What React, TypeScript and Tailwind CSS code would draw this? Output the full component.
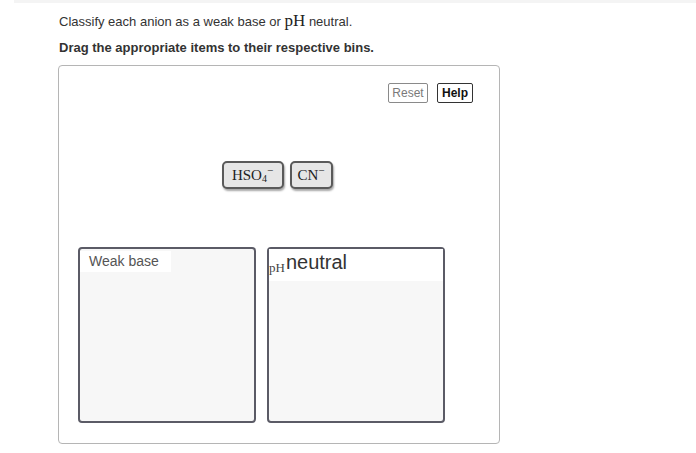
import React from "react";

export default function App() {
  const sans = { fontFamily: '"Liberation Sans", Arial, sans-serif' };
  return (
    <div className="relative w-[696px] h-[453px] bg-white overflow-hidden" style={sans}>
      <div className="absolute left-[14px] top-0 right-0 h-[3px] bg-[#f4f4f4]" />
      <div className="pl-[59px] pt-[13px]">
        <p className="text-[13px] leading-[16px] text-[#333]">
          Classify each anion as a weak base or{" "}
          <span className="text-[17px] text-[#222]" style={{ fontFamily: '"Liberation Serif", "Times New Roman", serif' }}>
            pH
          </span>{" "}
          neutral.
        </p>
        <p className="mt-[10px] text-[13px] leading-[16px] font-bold text-[#333]">
          Drag the appropriate items to their respective bins.
        </p>
      </div>
      <div className="ml-[58px] mt-[9px] w-[442px] h-[379px] border border-[#b5b5b5] rounded-[4px] flex flex-col">
        <div className="flex justify-end gap-[9px] pr-[26px] pt-[17px]">
          <div className="h-[20px] w-[40px] flex items-center justify-center border border-[#8a8a8a] rounded-[2px] text-[12px] text-[#7a7a7a]">
            Reset
          </div>
          <div className="h-[20px] w-[36px] flex items-center justify-center border border-[#333] rounded-[2px] text-[12px] text-[#111] font-semibold">
            Help
          </div>
        </div>
        <div className="flex justify-center gap-[6px] mt-[58px] pr-[4px]" style={{ fontFamily: '"Liberation Serif", "Times New Roman", serif' }}>
          <div className="h-[28px] w-[62px] flex items-center justify-center border-2 border-[#5a5a5a] rounded-[5px] bg-[#e6e6e6] shadow-[1px_2px_2px_rgba(0,0,0,0.35)] text-[15px] text-[#222]">
            <span>
              HSO<sub className="text-[10px]">4</sub>
              <sup className="text-[11px]">−</sup>
            </span>
          </div>
          <div className="h-[28px] w-[43px] flex items-center justify-center border-2 border-[#5a5a5a] rounded-[5px] bg-[#e6e6e6] shadow-[1px_2px_2px_rgba(0,0,0,0.35)] text-[15px] text-[#222]">
            <span>
              CN<sup className="text-[11px]">−</sup>
            </span>
          </div>
        </div>
        <div className="flex gap-[11px] pl-[19px] mt-[58px]">
          <div className="w-[178px] h-[176px] border-2 border-[#5b5b66] rounded-[4px] bg-[#f7f7f7]">
            <div className="inline-block bg-white h-[21px] pl-[9px] pr-[12px] text-[14px] leading-[21px] text-[#555]">
              Weak base
            </div>
          </div>
          <div className="w-[178px] h-[176px] border-2 border-[#5b5b66] rounded-[4px] bg-[#f7f7f7]">
            <div className="bg-white h-[32px] flex items-center gap-[1px]">
              <span className="text-[13px] text-[#444] mt-[6px]" style={{ fontFamily: '"Liberation Serif", "Times New Roman", serif' }}>
                pH
              </span>
              <span className="text-[20px] text-[#333] leading-[24px] -mt-[6px]">neutral</span>
            </div>
          </div>
        </div>
      </div>
    </div>
  );
}
